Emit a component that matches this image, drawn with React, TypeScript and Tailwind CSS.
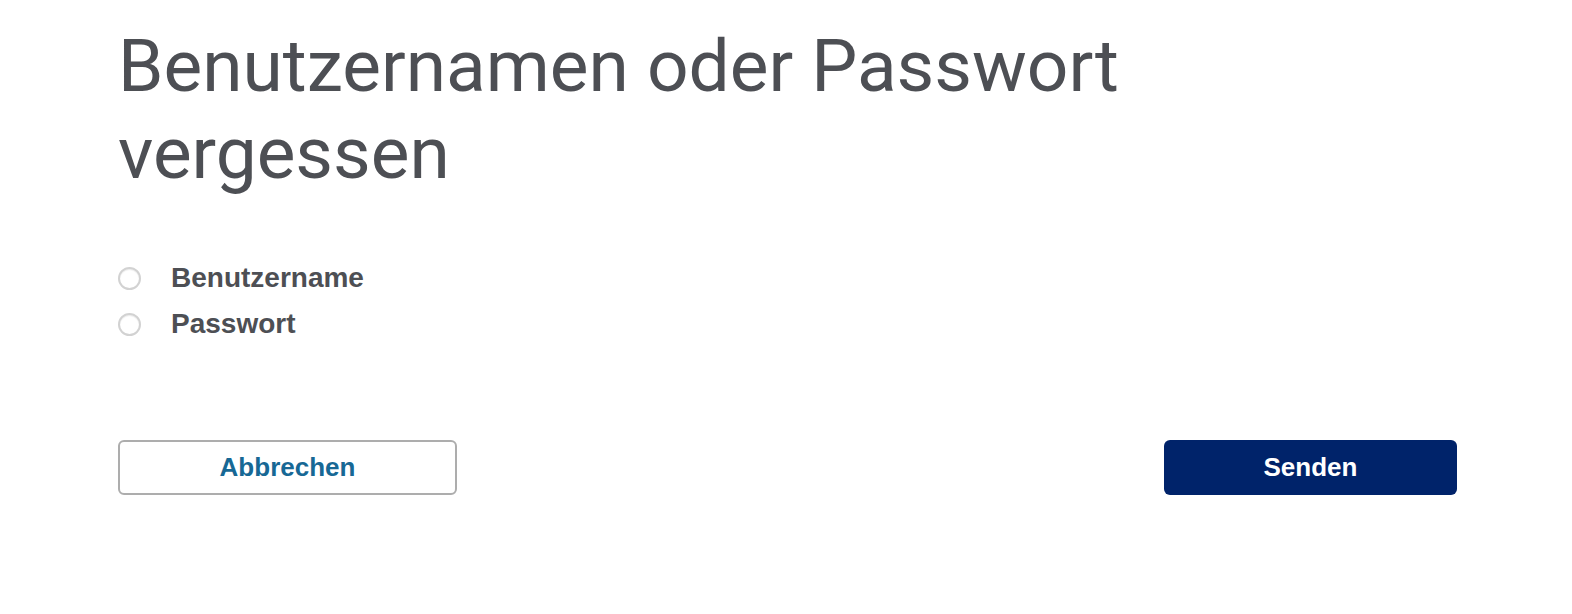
import { useState } from 'react';

const options = [
  { id: 'username', label: 'Benutzername' },
  { id: 'password', label: 'Passwort' },
];

export default function App() {
  const [selected, setSelected] = useState<string | null>(null);

  return (
    <div className="bg-white pl-[118px] pr-[115px] pt-[23px] pb-[120px] font-['Liberation_Sans',Arial,sans-serif]">
      <h1 className="max-w-[1100px] font-['Roboto',sans-serif] text-[73px] font-normal leading-[87px] text-[#4d4f54]">
        Benutzernamen oder Passwort vergessen
      </h1>

      <div className="mt-[65px] flex flex-col gap-[14px]">
        {options.map((opt) => (
          <label key={opt.id} className="flex cursor-pointer items-center">
            <input
              type="radio"
              name="forgot"
              checked={selected === opt.id}
              onChange={() => setSelected(opt.id)}
              className="peer sr-only"
            />
            <span className="h-[23px] w-[23px] rounded-full border-2 border-[#d2d2d2] bg-white shadow-[inset_0_1px_1px_rgba(0,0,0,0.08)] peer-checked:border-[7px] peer-checked:border-[#00236a]" />
            <span className="ml-[30px] text-[28px] font-bold leading-[32px] text-[#4d4f54]">{opt.label}</span>
          </label>
        ))}
      </div>

      <div className="mt-[100px] flex items-center justify-between">
        <button className="h-[55px] w-[339px] rounded-[6px] border-2 border-[#adadad] bg-white text-[26px] font-bold text-[#176895]">
          Abbrechen
        </button>
        <button className="h-[55px] w-[293px] rounded-[6px] bg-[#00236a] text-[26px] font-bold text-white">
          Senden
        </button>
      </div>
    </div>
  );
}
